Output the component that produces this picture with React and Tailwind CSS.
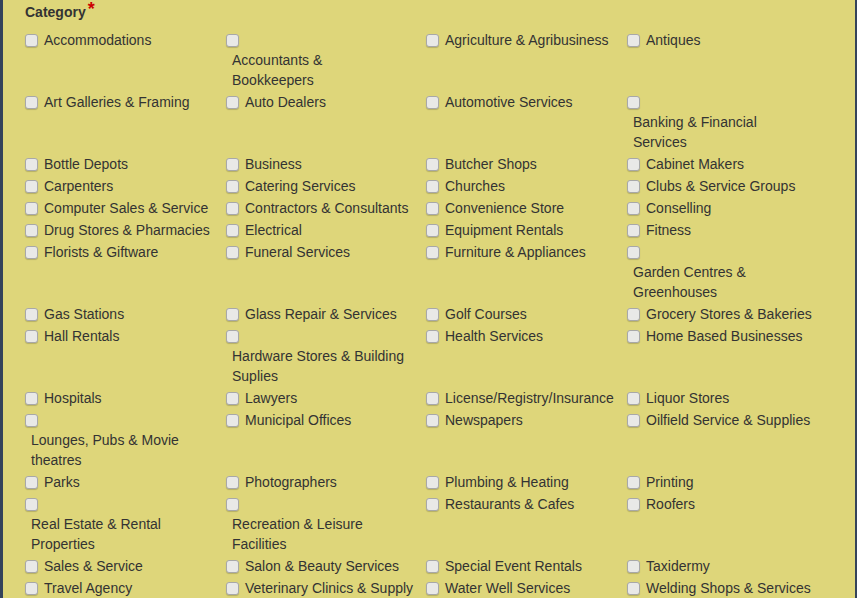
import React from "react";

const rows = [
  ["Accommodations", ["Accountants &", "Bookkeepers"], "Agriculture & Agribusiness", "Antiques"],
  ["Art Galleries & Framing", "Auto Dealers", "Automotive Services", ["Banking & Financial", "Services"]],
  ["Bottle Depots", "Business", "Butcher Shops", "Cabinet Makers"],
  ["Carpenters", "Catering Services", "Churches", "Clubs & Service Groups"],
  ["Computer Sales & Service", "Contractors & Consultants", "Convenience Store", "Conselling"],
  ["Drug Stores & Pharmacies", "Electrical", "Equipment Rentals", "Fitness"],
  ["Florists & Giftware", "Funeral Services", "Furniture & Appliances", ["Garden Centres &", "Greenhouses"]],
  ["Gas Stations", "Glass Repair & Services", "Golf Courses", "Grocery Stores & Bakeries"],
  ["Hall Rentals", ["Hardware Stores & Building", "Suplies"], "Health Services", "Home Based Businesses"],
  ["Hospitals", "Lawyers", "License/Registry/Insurance", "Liquor Stores"],
  [["Lounges, Pubs & Movie", "theatres"], "Municipal Offices", "Newspapers", "Oilfield Service & Supplies"],
  ["Parks", "Photographers", "Plumbing & Heating", "Printing"],
  [["Real Estate & Rental", "Properties"], ["Recreation & Leisure", "Facilities"], "Restaurants & Cafes", "Roofers"],
  ["Sales & Service", "Salon & Beauty Services", "Special Event Rentals", "Taxidermy"],
  ["Travel Agency", "Veterinary Clinics & Supply", "Water Well Services", "Welding Shops & Services"],
];

const Box = () => (
  <input
    type="checkbox"
    className="appearance-none w-[13px] h-[13px] shrink-0 rounded-[3px] border border-[#a8a8a8] bg-[#e9e9e7] shadow-[0_1px_1px_rgba(0,0,0,0.18)] m-0"
  />
);

const Item = ({ label }) => {
  if (Array.isArray(label)) {
    return (
      <div className="pb-[2px]">
        <div className="h-[20px] flex items-center">
          <Box />
        </div>
        {label.map((line) => (
          <div key={line} className="pl-[6px] h-[20px] leading-[20px] whitespace-nowrap">{line}</div>
        ))}
      </div>
    );
  }
  return (
    <div className="pb-[2px] h-[22px] flex items-start">
      <div className="h-[20px] flex items-center">
        <Box />
      </div>
      <span className="ml-[6px] leading-[20px] whitespace-nowrap">{label}</span>
    </div>
  );
};

const App = () => {
  return (
    <div className="w-[857px] h-[598px] overflow-hidden bg-[#34435a]">
      <div
        className="ml-[3px] w-[852px] h-full bg-[#ded67a] pl-[22px] pt-[2px] text-[14px] text-[#333333]"
        style={{ fontFamily: '"Liberation Sans", Arial, sans-serif' }}
      >
        {/* Heading */}
        <div className="h-[20px] leading-[20px] mb-[8px] font-bold">
          Category<span className="text-[#cc0000] text-[18px] leading-[10px] align-[2px] ml-[2px]">*</span>
        </div>

        {/* Options */}
        <div className="grid grid-cols-[201px_200px_201px_201px]">
          {rows.map((row, i) =>
            row.map((label, j) => <Item key={i + "-" + j} label={label} />)
          )}
        </div>
      </div>
    </div>
  );
};

export default App;
